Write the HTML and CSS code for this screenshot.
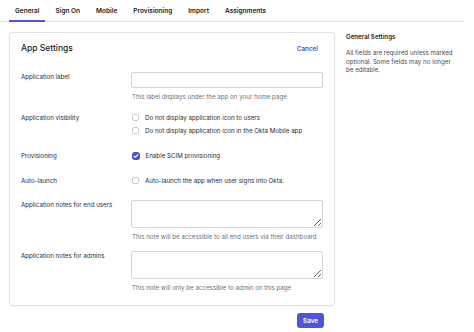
FILE: index.html
```html
<!DOCTYPE html>
<html lang="en">
<head>
    <meta charset="UTF-8">
    <meta name="viewport" content="width=device-width, initial-scale=1.0">
    <title>General - App Settings</title>
    <link rel="stylesheet" href="styles.css">
</head>
<body>
    <nav class="tabs">
        <a class="tab active">General</a>
        <a class="tab">Sign On</a>
        <a class="tab">Mobile</a>
        <a class="tab">Provisioning</a>
        <a class="tab">Import</a>
        <a class="tab">Assignments</a>
    </nav>

    <div class="layout">
        <div class="main">
            <form class="card">
                <div class="card-header">
                    <h2>App Settings</h2>
                    <a class="cancel">Cancel</a>
                </div>

                <div class="field field-label">
                    <label class="field-name">Application label</label>
                    <div class="control">
                        <input type="text" class="text-input">
                        <p class="hint">This label displays under the app on your home page</p>
                    </div>
                </div>

                <div class="field field-visibility">
                    <label class="field-name check-name">Application visibility</label>
                    <div class="control">
                        <div class="check"><span class="box"></span>Do not display application icon to users</div>
                        <div class="check"><span class="box"></span>Do not display application icon in the Okta Mobile app</div>
                    </div>
                </div>

                <div class="field field-gap">
                    <label class="field-name check-name">Provisioning</label>
                    <div class="control">
                        <div class="check">
                            <span class="box checked">
                                <svg viewBox="0 0 8 8" width="8" height="8"><path d="M2.1 4.1 L3.4 5.3 L5.9 2.7" fill="none" stroke="#fff" stroke-width="1.2" stroke-linecap="round" stroke-linejoin="round"/></svg>
                            </span>Enable SCIM provisioning
                        </div>
                    </div>
                </div>

                <div class="field field-gap">
                    <label class="field-name check-name">Auto-launch</label>
                    <div class="control">
                        <div class="check"><span class="box"></span>Auto-launch the app when user signs into Okta.</div>
                    </div>
                </div>

                <div class="field field-notes">
                    <label class="field-name">Application notes for end users</label>
                    <div class="control">
                        <textarea class="text-area"></textarea>
                        <p class="hint">This note will be accessible to all end users via their dashboard</p>
                    </div>
                </div>

                <div class="field field-admins">
                    <label class="field-name">Application notes for admins</label>
                    <div class="control">
                        <textarea class="text-area"></textarea>
                        <p class="hint">This note will only be accessible to admin on this page</p>
                    </div>
                </div>
            </form>

            <div class="actions">
                <button type="button" class="save">Save</button>
            </div>
        </div>

        <aside class="sidebar">
            <h3>General Settings</h3>
            <p>All fields are required unless marked optional. Some fields may no longer be editable.</p>
        </aside>
    </div>
</body>
</html>
```

FILE: styles.css
```css
body {
    margin: 0;
    font-family: Inter, "Noto Sans", sans-serif;
    color: #1d1d21;
    background-color: #fff;
}

/* tabs */
.tabs {
    display: flex;
    width: 456px;
    padding-left: 9px;
    border-bottom: 1px solid #e4e4e7;
}
.tab {
    height: 20px;
    line-height: 22px;
    padding: 0 5px 0 6px;
    margin-right: 5px;
    font-size: 6.5px;
    font-weight: 600;
    color: #1d1d21;
    border-bottom: 2px solid transparent;
    margin-bottom: -1px;
}
.tab.active {
    border-bottom-color: #4f54d4;
}

/* layout */
.layout {
    display: flex;
    gap: 11px;
    padding: 10px 0 0 9px;
}
.main {
    width: 326px;
}
.card {
    border: 1px solid #e1e1e4;
    border-radius: 3px;
    padding: 0 11px 13px 11px;
    box-shadow: 0 1px 2px rgba(0,0,0,0.03);
}
.card-header {
    display: flex;
    justify-content: space-between;
    align-items: baseline;
    padding-top: 10px;
}
.card-header h2 {
    margin: 0;
    font-size: 8.5px;
    line-height: 10px;
    font-weight: 500;
}
.cancel {
    font-size: 6.3px;
    font-weight: 600;
    color: #4b50c4;
    margin-right: 5px;
}

/* fields */
.field {
    display: flex;
    font-size: 6.2px;
    color: #2a2a30;
}
.field-name {
    width: 110px;
    flex-shrink: 0;
    line-height: 9px;
}
.check-name {
    line-height: 13px;
}
.control {
    width: 192px;
}
.field-label { margin-top: 19px; }
.field-visibility { margin-top: 10px; }
.field-gap { margin-top: 12px; }
.field-notes { margin-top: 13px; }
.field-admins { margin-top: 10px; }

.text-input {
    display: block;
    box-sizing: border-box;
    width: 192px;
    height: 16px;
    margin: 0;
    border: 1px solid #d4d4d8;
    border-radius: 2px;
}
.text-area {
    display: block;
    box-sizing: border-box;
    width: 192px;
    height: 28px;
    margin: 0;
    border: 1px solid #d4d4d8;
    border-radius: 2px;
    resize: vertical;
}
.hint {
    margin: 4px 0 0 1px;
    line-height: 9px;
    color: #6e6e78;
}

.check {
    display: flex;
    align-items: center;
    height: 13px;
}
.box {
    display: inline-flex;
    align-items: center;
    justify-content: center;
    box-sizing: border-box;
    width: 7px;
    height: 7px;
    margin: 0 6px 0 1px;
    border: 1px solid #c9c9cf;
    border-radius: 2px;
    background-color: #fff;
}
.box.checked {
    width: 8px;
    height: 8px;
    margin-left: 0.5px;
    border: none;
    border-radius: 3px;
    background-color: #4a50c9;
}

/* save */
.actions {
    display: flex;
    justify-content: flex-end;
    padding: 7px 11px 0 0;
}
.save {
    width: 27px;
    height: 15px;
    padding: 0;
    border: none;
    border-radius: 3px;
    background-color: #4f55d8;
    color: #fff;
    font-family: Inter, sans-serif;
    font-size: 6.3px;
    font-weight: 600;
}

/* sidebar */
.sidebar {
    width: 112px;
}
.sidebar h3 {
    margin: 0;
    font-size: 6.2px;
    line-height: 9px;
    font-weight: 600;
}
.sidebar p {
    margin: 8px 0 0;
    font-size: 6.2px;
    line-height: 8.7px;
    color: #4a4a52;
}
```
